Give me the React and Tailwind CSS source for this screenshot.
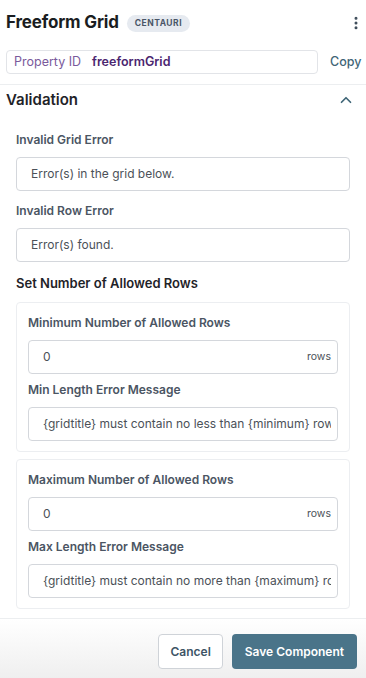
import { ChevronUp, EllipsisVertical } from 'lucide-react';

const Field = ({ label, value, suffix }) => (
  <div>
    <label className="block text-[12px] leading-4 font-semibold text-[#4b5563]">{label}</label>
    <div className="mt-[9px] flex items-center h-[34px] rounded-[4px] border border-[#d4d7dc] bg-white pl-[14px] pr-[6px] overflow-hidden">
      <input
        readOnly
        value={value}
        className="flex-1 min-w-0 bg-transparent text-[12px] text-[#4b5158] outline-none"
      />
      {suffix && <span className="text-[10.5px] text-[#4b5158] pl-2">{suffix}</span>}
    </div>
  </div>
);

const RowsCard = ({ countLabel, msgLabel, msg }) => (
  <div className="rounded-[4px] border border-[#eceef1] px-[11px] pt-[12px] pb-[10px] space-y-[8px]">
    <Field label={countLabel} value="0" suffix="rows" />
    <Field label={msgLabel} value={msg} />
  </div>
);

const App = () => {
  return (
    <div className="w-[366px] h-[678px] bg-white flex flex-col overflow-hidden" style={{ fontFamily: 'Inter, "Noto Sans", sans-serif' }}>
      <div className="px-[6px] pt-[7px]">
        <div className="flex items-center h-8">
          <h1 className="text-[17px] font-bold text-[#1a1d21] tracking-[-0.01em]">Freeform Grid</h1>
          <span className="ml-[8px] h-[17px] px-[8px] rounded-full bg-[#e6eaf0] text-[8.5px] font-bold tracking-[0.06em] text-[#4a5667] flex items-center">
            CENTAURI
          </span>
          <button className="ml-auto -mr-[4px] text-[#3d4c5a]">
            <EllipsisVertical size={16} strokeWidth={2.5} />
          </button>
        </div>
        <div className="mt-[11px] flex items-center">
          <div className="flex-1 h-6 flex items-center rounded-[4px] border border-[#e2e4e8] px-[7px] text-[12.5px]">
            <span className="text-[#7a5a9c]">Property ID</span>
            <span className="ml-[11px] font-semibold text-[#4b2670]">freeformGrid</span>
          </div>
          <button className="ml-[12px] w-[30px] text-[12.5px] font-medium text-[#3f6577]">Copy</button>
        </div>
      </div>
      <div className="mt-[10px] border-b border-[#eceef0]"></div>

      <div className="flex-1 overflow-hidden">
        <div className="flex items-center h-[30px] px-[6px]">
          <h2 className="text-[15px] font-semibold text-[#1f2328]">Validation</h2>
          <ChevronUp size={18} strokeWidth={2.25} className="ml-auto mr-[5px] text-[#3f6577]" />
        </div>

        <div className="px-[16px] pt-[17px]">
          <Field label="Invalid Grid Error" value="Error(s) in the grid below." />
          <div className="mt-[12px]">
            <Field label="Invalid Row Error" value="Error(s) found." />
          </div>
          <h3 className="mt-[12px] text-[13px] leading-[18px] font-semibold text-[#1f2328]">Set Number of Allowed Rows</h3>
          <div className="mt-[10px] space-y-[7px]">
            <RowsCard
              countLabel="Minimum Number of Allowed Rows"
              msgLabel="Min Length Error Message"
              msg="{gridtitle} must contain no less than {minimum} rows"
            />
            <RowsCard
              countLabel="Maximum Number of Allowed Rows"
              msgLabel="Max Length Error Message"
              msg="{gridtitle} must contain no more than {maximum} rows"
            />
          </div>
        </div>
      </div>

      <div className="h-[60px] shrink-0 border-t border-[#eceef0] bg-gradient-to-b from-white to-[#efefef] flex items-start justify-end gap-[9px] pt-[15px] pr-[9px]">
        <button className="h-[35px] px-[11px] rounded-[4px] border border-[#cfd3d8] bg-white text-[12px] font-semibold text-[#3e5566]">
          Cancel
        </button>
        <button className="h-[35px] px-[13px] rounded-[4px] bg-[#4a7489] text-[12px] font-semibold text-white">
          Save Component
        </button>
      </div>
    </div>
  );
};

export default App;
